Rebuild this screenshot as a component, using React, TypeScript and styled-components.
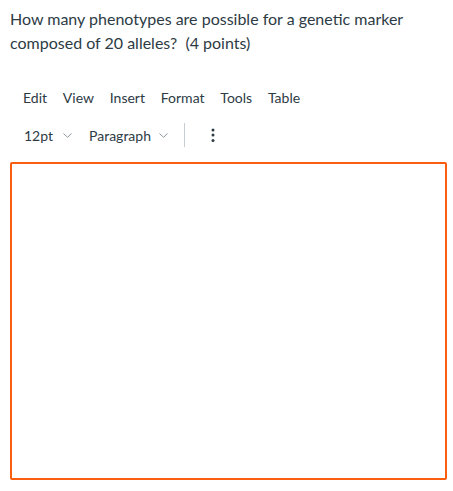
import React from "react";
import styled, { createGlobalStyle } from "styled-components";

const Global = createGlobalStyle`
  html, body { margin: 0; padding: 0; background: #ffffff; }
  body { font-family: Lato, "Open Sans", sans-serif; color: #2d3b45; }
`;

const Page = styled.div`
  width: 453px;
  padding: 7px 6px 0 10px;
  box-sizing: border-box;
`;

const Question = styled.p`
  margin: 0;
  font-size: 16px;
  line-height: 23.5px;
  color: #2d3b45;
  width: 420px;
`;

const MenuBar = styled.div`
  display: flex;
  gap: 15.8px;
  margin-top: 31px;
  padding-left: 13px;
  height: 24px;
  align-items: center;
`;

const MenuItem = styled.span`
  font-size: 14px;
  color: #2d3b45;
  white-space: nowrap;
`;

const Toolbar = styled.div`
  display: flex;
  align-items: center;
  margin-top: 14px;
  height: 24px;
  padding-left: 14px;
`;

const Dropdown = styled.span<{ $gap: number; $chev: number }>`
  display: inline-flex;
  align-items: center;
  font-size: 14px;
  color: #2d3b45;
  margin-right: ${(p) => p.$gap}px;
  svg { margin-left: ${(p) => p.$chev}px; }
`;

const Divider = styled.span`
  width: 1px;
  height: 24px;
  background: #c7cdd1;
`;

const More = styled.span`
  margin-left: 26px;
  display: inline-flex;
`;

const Editor = styled.div`
  margin-top: 15px;
  width: 437px;
  height: 318px;
  box-sizing: border-box;
  border: 2px solid #fb5d0f;
  border-radius: 2px;
`;

const Chevron = () => (
  <svg width="9" height="5" viewBox="0 0 9 5">
    <path d="M0.5 0.5 L4.5 4.3 L8.5 0.5" fill="none" stroke="#8b969e" strokeWidth="1" />
  </svg>
);

const Dots = () => (
  <svg width="4" height="14" viewBox="0 0 4 14">
    <circle cx="2" cy="2" r="1.5" fill="#2d3b45" />
    <circle cx="2" cy="7" r="1.5" fill="#2d3b45" />
    <circle cx="2" cy="12.5" r="1.5" fill="#2d3b45" />
  </svg>
);

export default function App() {
  return (
    <>
      <Global />
      <Page>
        <Question>
          How many phenotypes are possible for a genetic marker composed of 20 alleles?&nbsp; (4 points)
        </Question>
        <MenuBar>
          {["Edit", "View", "Insert", "Format", "Tools", "Table"].map((m) => (
            <MenuItem key={m}>{m}</MenuItem>
          ))}
        </MenuBar>
        <Toolbar>
          <Dropdown $gap={17} $chev={10}>
            12pt
            <Chevron />
          </Dropdown>
          <Dropdown $gap={16} $chev={8}>
            Paragraph
            <Chevron />
          </Dropdown>
          <Divider />
          <More>
            <Dots />
          </More>
        </Toolbar>
        <Editor />
      </Page>
    </>
  );
}
